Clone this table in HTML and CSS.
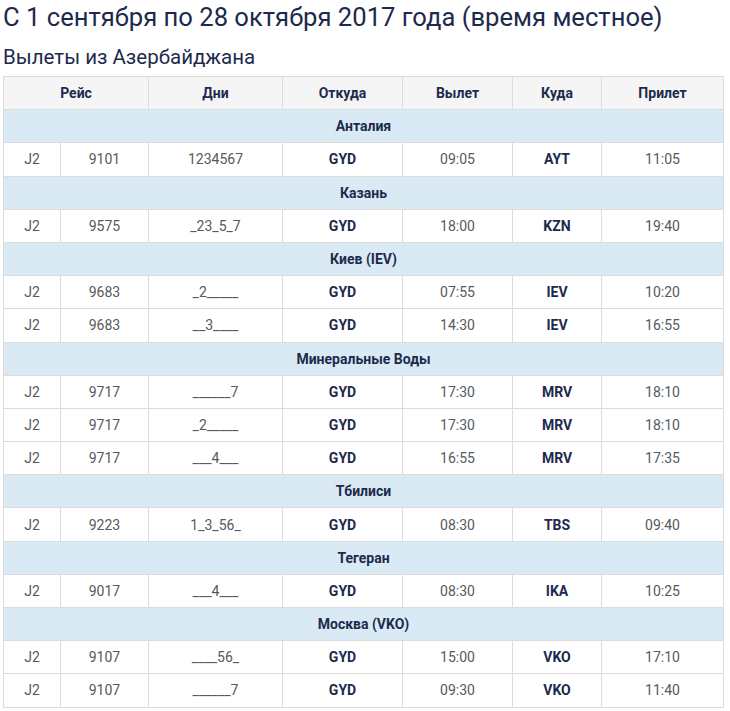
FILE: index.html
```html
<!DOCTYPE html>
<html lang="ru">
<head>
<meta charset="utf-8">
<link rel="stylesheet" href="styles.css">
</head>
<body>
<h1 class="title">С 1 сентября по 28 октября 2017 года (время местное)</h1>
<h2 class="subtitle">Вылеты из Азербайджана</h2>
<table class="sched">
<colgroup>
<col class="c1"><col class="c2"><col class="c3"><col class="c4"><col class="c5"><col class="c6"><col class="c7">
</colgroup>
<thead>
<tr><th colspan="2">Рейс</th><th>Дни</th><th>Откуда</th><th>Вылет</th><th>Куда</th><th>Прилет</th></tr>
</thead>
<tbody>
<tr class="grp"><td colspan="7">Анталия</td></tr>
<tr><td>J2</td><td>9101</td><td>1234567</td><td class="b">GYD</td><td>09:05</td><td class="b">AYT</td><td>11:05</td></tr>
<tr class="grp"><td colspan="7">Казань</td></tr>
<tr><td>J2</td><td>9575</td><td>_23_5_7</td><td class="b">GYD</td><td>18:00</td><td class="b">KZN</td><td>19:40</td></tr>
<tr class="grp"><td colspan="7">Киев (IEV)</td></tr>
<tr><td>J2</td><td>9683</td><td>_2_____</td><td class="b">GYD</td><td>07:55</td><td class="b">IEV</td><td>10:20</td></tr>
<tr><td>J2</td><td>9683</td><td>__3____</td><td class="b">GYD</td><td>14:30</td><td class="b">IEV</td><td>16:55</td></tr>
<tr class="grp"><td colspan="7">Минеральные Воды</td></tr>
<tr><td>J2</td><td>9717</td><td>______7</td><td class="b">GYD</td><td>17:30</td><td class="b">MRV</td><td>18:10</td></tr>
<tr><td>J2</td><td>9717</td><td>_2_____</td><td class="b">GYD</td><td>17:30</td><td class="b">MRV</td><td>18:10</td></tr>
<tr><td>J2</td><td>9717</td><td>___4___</td><td class="b">GYD</td><td>16:55</td><td class="b">MRV</td><td>17:35</td></tr>
<tr class="grp"><td colspan="7">Тбилиси</td></tr>
<tr><td>J2</td><td>9223</td><td>1_3_56_</td><td class="b">GYD</td><td>08:30</td><td class="b">TBS</td><td>09:40</td></tr>
<tr class="grp"><td colspan="7">Тегеран</td></tr>
<tr><td>J2</td><td>9017</td><td>___4___</td><td class="b">GYD</td><td>08:30</td><td class="b">IKA</td><td>10:25</td></tr>
<tr class="grp"><td colspan="7">Москва (VKO)</td></tr>
<tr><td>J2</td><td>9107</td><td>____56_</td><td class="b">GYD</td><td>15:00</td><td class="b">VKO</td><td>17:10</td></tr>
<tr><td>J2</td><td>9107</td><td>______7</td><td class="b">GYD</td><td>09:30</td><td class="b">VKO</td><td>11:40</td></tr>
</tbody>
</table>
</body>
</html>
```
FILE: styles.css
```css
html, body {
  margin: 0;
  padding: 0;
  background: #ffffff;
}
body {
  padding: 0 0 0 3px;
  font-family: Roboto, "Noto Sans", sans-serif;
  color: #1d2a4c;
}
.title {
  margin: 0;
  padding-top: 1px;
  font-size: 25.6px;
  font-weight: 400;
  line-height: 32px;
  color: #1d2a4c;
}
.subtitle {
  margin: 11px 0 0 0;
  font-size: 20.5px;
  font-weight: 400;
  line-height: 26px;
  color: #1d2a4c;
}
.sched {
  margin-top: 6px;
  border-collapse: collapse;
  table-layout: fixed;
  width: 720px;
  font-size: 14px;
}
.c1 { width: 57px; }
.c2 { width: 88px; }
.c3 { width: 134px; }
.c4 { width: 120px; }
.c5 { width: 110px; }
.c6 { width: 89px; }
.c7 { width: 122px; }
.sched th, .sched td {
  border: 1px solid #dcdcdc;
  height: 32px;
  padding: 0 4px;
  text-align: center;
  vertical-align: middle;
  box-sizing: border-box;
}
.sched tr {
  height: 33.2px;
}
.sched th {
  background: #f5f5f5;
  font-weight: 700;
  color: #1d2a4c;
}
.sched td {
  color: #555a60;
}
.sched td.b {
  font-weight: 700;
  color: #1d2a4c;
}
.grp td {
  background: #d9eaf5;
  font-weight: 700;
  color: #1d2a4c;
}
```
